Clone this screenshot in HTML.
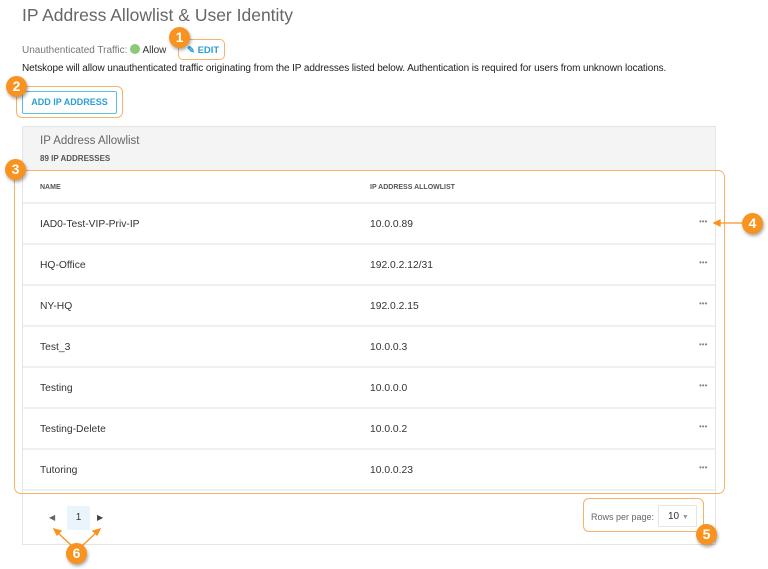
<!DOCTYPE html>
<html><head><style>
*{margin:0;padding:0;box-sizing:border-box}
body{width:768px;height:569px;background:#fff;font-family:"Liberation Sans",sans-serif;position:relative;overflow:hidden;color:#333}
.a{position:absolute}
.badge{position:absolute;width:21px;height:21px;border-radius:50%;background:#f7931e;color:#fff;font-size:14px;font-weight:bold;text-align:center;line-height:21px;box-shadow:1px 2px 3px rgba(0,0,0,.35)}
.row{position:absolute;left:23px;width:692px;height:41px;border-top:2px solid #f0f0f0;font-size:10.3px;color:#333}
.row span{position:absolute;top:15px}
.dots{position:absolute;left:676px;top:13px;font-size:8px;color:#888;letter-spacing:0px}
</style></head><body>
<div class="a" style="left:22px;top:5px;font-size:17.5px;color:#666;font-weight:300">IP Address Allowlist &amp; User Identity</div>
<div class="a" style="left:22px;top:44px;font-size:10px;color:#777">Unauthenticated Traffic: <span style="display:inline-block;width:10px;height:10px;border-radius:50%;background:#8bc87a;vertical-align:-1px"></span> <span style="color:#333">Allow</span></div>
<div class="a" style="left:178px;top:39px;width:47px;height:21px;border:1px solid #f7b26a;border-radius:5px;font-size:9.5px;color:#2a9fd6;font-weight:bold;padding:5px 0 0 8px">✎ EDIT</div>
<div class="a" style="left:22px;top:63px;font-size:10px;color:#222;letter-spacing:-0.1px">Netskope will allow unauthenticated traffic originating from the IP addresses listed below. Authentication is required for users from unknown locations.</div>
<div class="a" style="left:16px;top:86px;width:107px;height:32px;border:1px solid #f7b26a;border-radius:6px"></div>
<div class="a" style="left:22px;top:91px;width:95px;height:23px;border:1px solid #5bc0de;border-radius:2px;font-size:9px;font-weight:bold;color:#2a9fd6;text-align:center;line-height:21px">ADD IP ADDRESS</div>
<div class="a" style="left:22px;top:126px;width:694px;height:419px;border:1px solid #e5e5e5"></div>
<div class="a" style="left:23px;top:127px;width:692px;height:44px;background:#f4f4f4"></div>
<div class="a" style="left:40px;top:135px;font-size:11.5px;color:#666">IP Address Allowlist</div>
<div class="a" style="left:40px;top:154px;font-size:8px;font-weight:bold;color:#555">89 IP ADDRESSES</div>
<div class="a" style="left:14px;top:170px;width:711px;height:324px;border:1px solid #f7b26a;border-radius:7px"></div>
<div class="a" style="left:40px;top:184px;font-size:7px;font-weight:bold;color:#555">NAME</div>
<div class="a" style="left:370px;top:184px;font-size:7px;font-weight:bold;color:#555">IP ADDRESS ALLOWLIST</div>
<div class="row" style="top:202px"><span style="left:17px">IAD0-Test-VIP-Priv-IP</span><span style="left:347px">10.0.0.89</span><div class="dots">•••</div></div>
<div class="row" style="top:243px"><span style="left:17px">HQ-Office</span><span style="left:347px">192.0.2.12/31</span><div class="dots">•••</div></div>
<div class="row" style="top:284px"><span style="left:17px">NY-HQ</span><span style="left:347px">192.0.2.15</span><div class="dots">•••</div></div>
<div class="row" style="top:325px"><span style="left:17px">Test_3</span><span style="left:347px">10.0.0.3</span><div class="dots">•••</div></div>
<div class="row" style="top:366px"><span style="left:17px">Testing</span><span style="left:347px">10.0.0.0</span><div class="dots">•••</div></div>
<div class="row" style="top:407px"><span style="left:17px">Testing-Delete</span><span style="left:347px">10.0.0.2</span><div class="dots">•••</div></div>
<div class="row" style="top:448px;border-bottom:2px solid #f0f0f0;height:43px"><span style="left:17px">Tutoring</span><span style="left:347px">10.0.0.23</span><div class="dots">•••</div></div>
<div class="a" style="left:49px;top:513px;font-size:8px;color:#666">◀</div>
<div class="a" style="left:67px;top:506px;width:23px;height:24px;background:#eaf5fb;font-size:10px;text-align:center;line-height:24px">1</div>
<div class="a" style="left:97px;top:513px;font-size:8px;color:#444">▶</div>
<div class="a" style="left:583px;top:498px;width:121px;height:34px;border:1px solid #f7b26a;border-radius:6px"></div>
<div class="a" style="left:591px;top:512px;font-size:9px;color:#666">Rows per page:</div>
<div class="a" style="left:658px;top:505px;width:39px;height:22px;border:1px solid #e5e5e5;font-size:10px;padding:5px 0 0 9px">10 <span style="color:#999;font-size:7px">▼</span></div>
<svg class="a" style="left:0;top:0" width="768" height="569">
<g stroke="#f7931e" stroke-width="1.3" fill="#f7931e">
<line x1="742" y1="223" x2="718" y2="223"/><polygon points="714,223 720,220 720,226"/>
<line x1="72" y1="546" x2="57" y2="532"/><polygon points="54,529 61,531 57,535"/>
<line x1="82" y1="546" x2="97" y2="532"/><polygon points="100,529 93,531 97,535"/>
</g></svg>
<div class="badge" style="left:169px;top:27px">1</div>
<div class="badge" style="left:6px;top:76px">2</div>
<div class="badge" style="left:5px;top:159px">3</div>
<div class="badge" style="left:742px;top:213px">4</div>
<div class="badge" style="left:696px;top:524px">5</div>
<div class="badge" style="left:66px;top:543px">6</div>
</body></html>
